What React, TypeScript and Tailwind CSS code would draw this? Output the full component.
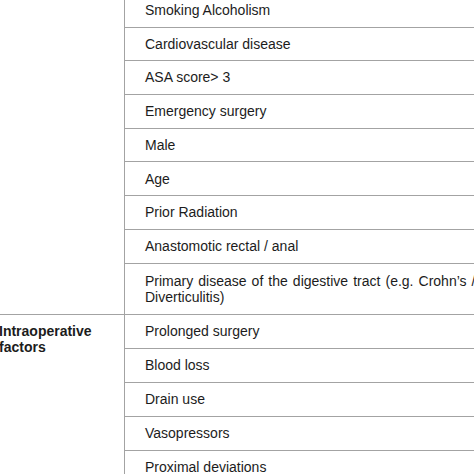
import React from "react";

const group1 = [
  "Smoking Alcoholism",
  "Cardiovascular disease",
  "ASA score> 3",
  "Emergency surgery",
  "Male",
  "Age",
  "Prior Radiation",
  "Anastomotic rectal / anal",
];

const group2 = [
  "Prolonged surgery",
  "Blood loss",
  "Drain use",
  "Vasopressors",
  "Proximal deviations",
];

function Row({ text, tall }: { text: string; tall?: boolean }) {
  return (
    <div
      className={
        tall
          ? "flex h-[34px] shrink-0 items-center border-b-[1.5px] border-[#a3a3a3] pl-[20px]"
          : "flex h-[33.7px] shrink-0 items-center border-b-[1.5px] border-[#a3a3a3] pl-[20px]"
      }
    >
      <span>{text}</span>
    </div>
  );
}

export default function App() {
  return (
    <div
      className="h-[474px] w-[474px] overflow-hidden bg-white text-[14px] leading-[16.5px] text-[#1c1c1c]"
      style={{ fontFamily: '"Liberation Sans", Arial, sans-serif' }}
    >
      <div className="-mt-[6px] flex w-[520px] flex-col">
        <div className="flex border-b-[1.5px] border-[#a3a3a3]">
          <div className="w-[125px] shrink-0 border-r-[1.5px] border-[#a3a3a3]" />
          <div className="flex flex-1 flex-col">
            {group1.map((t) => (
              <Row key={t} text={t} />
            ))}
            <div className="h-[50px] pl-[20px] pt-[9px]">
              <p className="w-[330.5px] text-justify">
                Primary disease of the digestive tract (e.g. Crohn’s / Diverticulitis)
              </p>
            </div>
          </div>
        </div>
        <div className="flex">
          <div className="w-[125px] shrink-0 border-r-[1.5px] border-[#a3a3a3] pt-[8px] font-bold">
            <p className="-ml-[1px]">Intraoperative</p>
            <p className="-ml-[1px]">factors</p>
          </div>
          <div className="flex flex-1 flex-col">
            {group2.map((t) => (
              <Row key={t} text={t} tall />
            ))}
          </div>
        </div>
      </div>
    </div>
  );
}
